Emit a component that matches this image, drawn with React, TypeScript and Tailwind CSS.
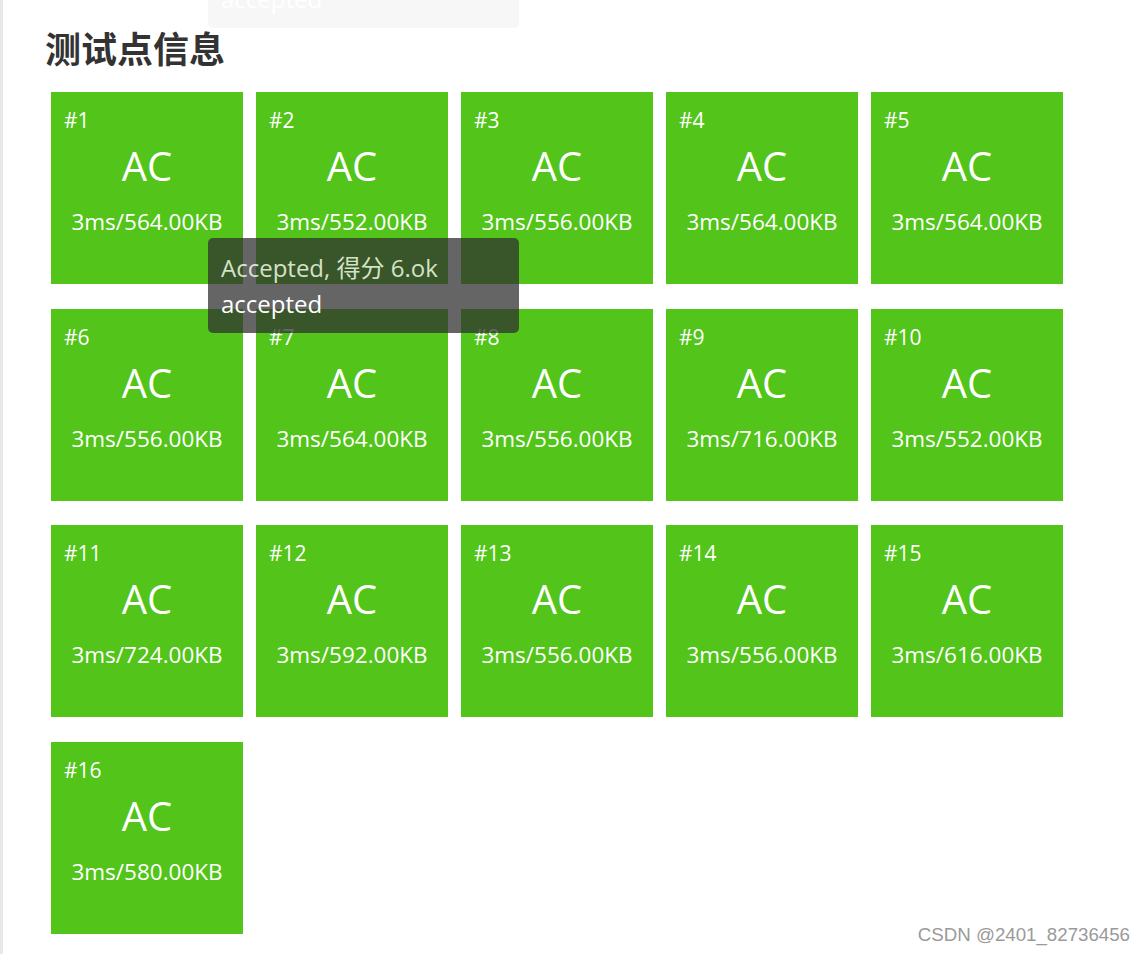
import React from 'react';

type TestCase = { id: number; time: string; memory: string };

const cases: TestCase[] = [
  { id: 1, time: '3ms', memory: '564.00KB' },
  { id: 2, time: '3ms', memory: '552.00KB' },
  { id: 3, time: '3ms', memory: '556.00KB' },
  { id: 4, time: '3ms', memory: '564.00KB' },
  { id: 5, time: '3ms', memory: '564.00KB' },
  { id: 6, time: '3ms', memory: '556.00KB' },
  { id: 7, time: '3ms', memory: '564.00KB' },
  { id: 8, time: '3ms', memory: '556.00KB' },
  { id: 9, time: '3ms', memory: '716.00KB' },
  { id: 10, time: '3ms', memory: '552.00KB' },
  { id: 11, time: '3ms', memory: '724.00KB' },
  { id: 12, time: '3ms', memory: '592.00KB' },
  { id: 13, time: '3ms', memory: '556.00KB' },
  { id: 14, time: '3ms', memory: '556.00KB' },
  { id: 15, time: '3ms', memory: '616.00KB' },
  { id: 16, time: '3ms', memory: '580.00KB' },
];

const CaseCard: React.FC<{ item: TestCase }> = ({ item }) => (
  <div className="w-[192px] h-[192px] bg-[#52c41a] text-white flex flex-col pt-[14px]">
    <div className="pl-[13px] text-[21px] leading-[28px]">#{item.id}</div>
    <div className="mt-[8px] text-center text-[40px] leading-[48px]">AC</div>
    <div className="mt-[17px] text-center text-[22.5px] leading-[30px]">
      {item.time}/{item.memory}
    </div>
  </div>
);

const Tooltip: React.FC<{ className: string; faded?: boolean }> = ({ className, faded }) => (
  <div
    className={`absolute left-[208px] w-[311px] h-[95px] rounded-[5px] px-[13px] py-[12px] text-[24px] leading-[36px] ${
      faded ? 'bg-[#f7f7f7] text-white' : 'bg-[rgba(50,50,50,0.75)] text-[rgba(240,255,225,0.85)]'
    } ${className}`}
  >
    <div>Accepted, 得分 6.ok</div>
    <div className={faded ? '' : 'text-white'}>accepted</div>
  </div>
);

export default function App() {
  return (
    <div
      className="relative h-screen overflow-hidden bg-white border-l-[3px] border-[#e8e8e8]"
      style={{ fontFamily: '"Open Sans", "Noto Sans CJK SC", sans-serif' }}
    >
      <Tooltip faded className="top-[-67px] -translate-x-[3px]" />

      <div className="pl-[42px] pt-[26px]">
        <h2
          className="text-[36px] leading-[42px] font-bold text-[#333]"
          style={{ fontFamily: '"Noto Sans CJK SC", sans-serif' }}
        >
          测试点信息
        </h2>
      </div>

      <div className="pl-[48px] pt-[24px] grid grid-cols-[repeat(5,192px)] gap-x-[13px] gap-y-[24.7px]">
        {cases.map(c => (
          <CaseCard key={c.id} item={c} />
        ))}
      </div>

      <Tooltip className="top-[238px] -translate-x-[3px]" />

      <div
        className="absolute right-[16px] bottom-[8px] text-[18.7px] leading-[22px] text-[#9a9a9a]"
        style={{ fontFamily: '"Liberation Sans", Arial, sans-serif' }}
      >
        CSDN @2401_82736456
      </div>
    </div>
  );
}
